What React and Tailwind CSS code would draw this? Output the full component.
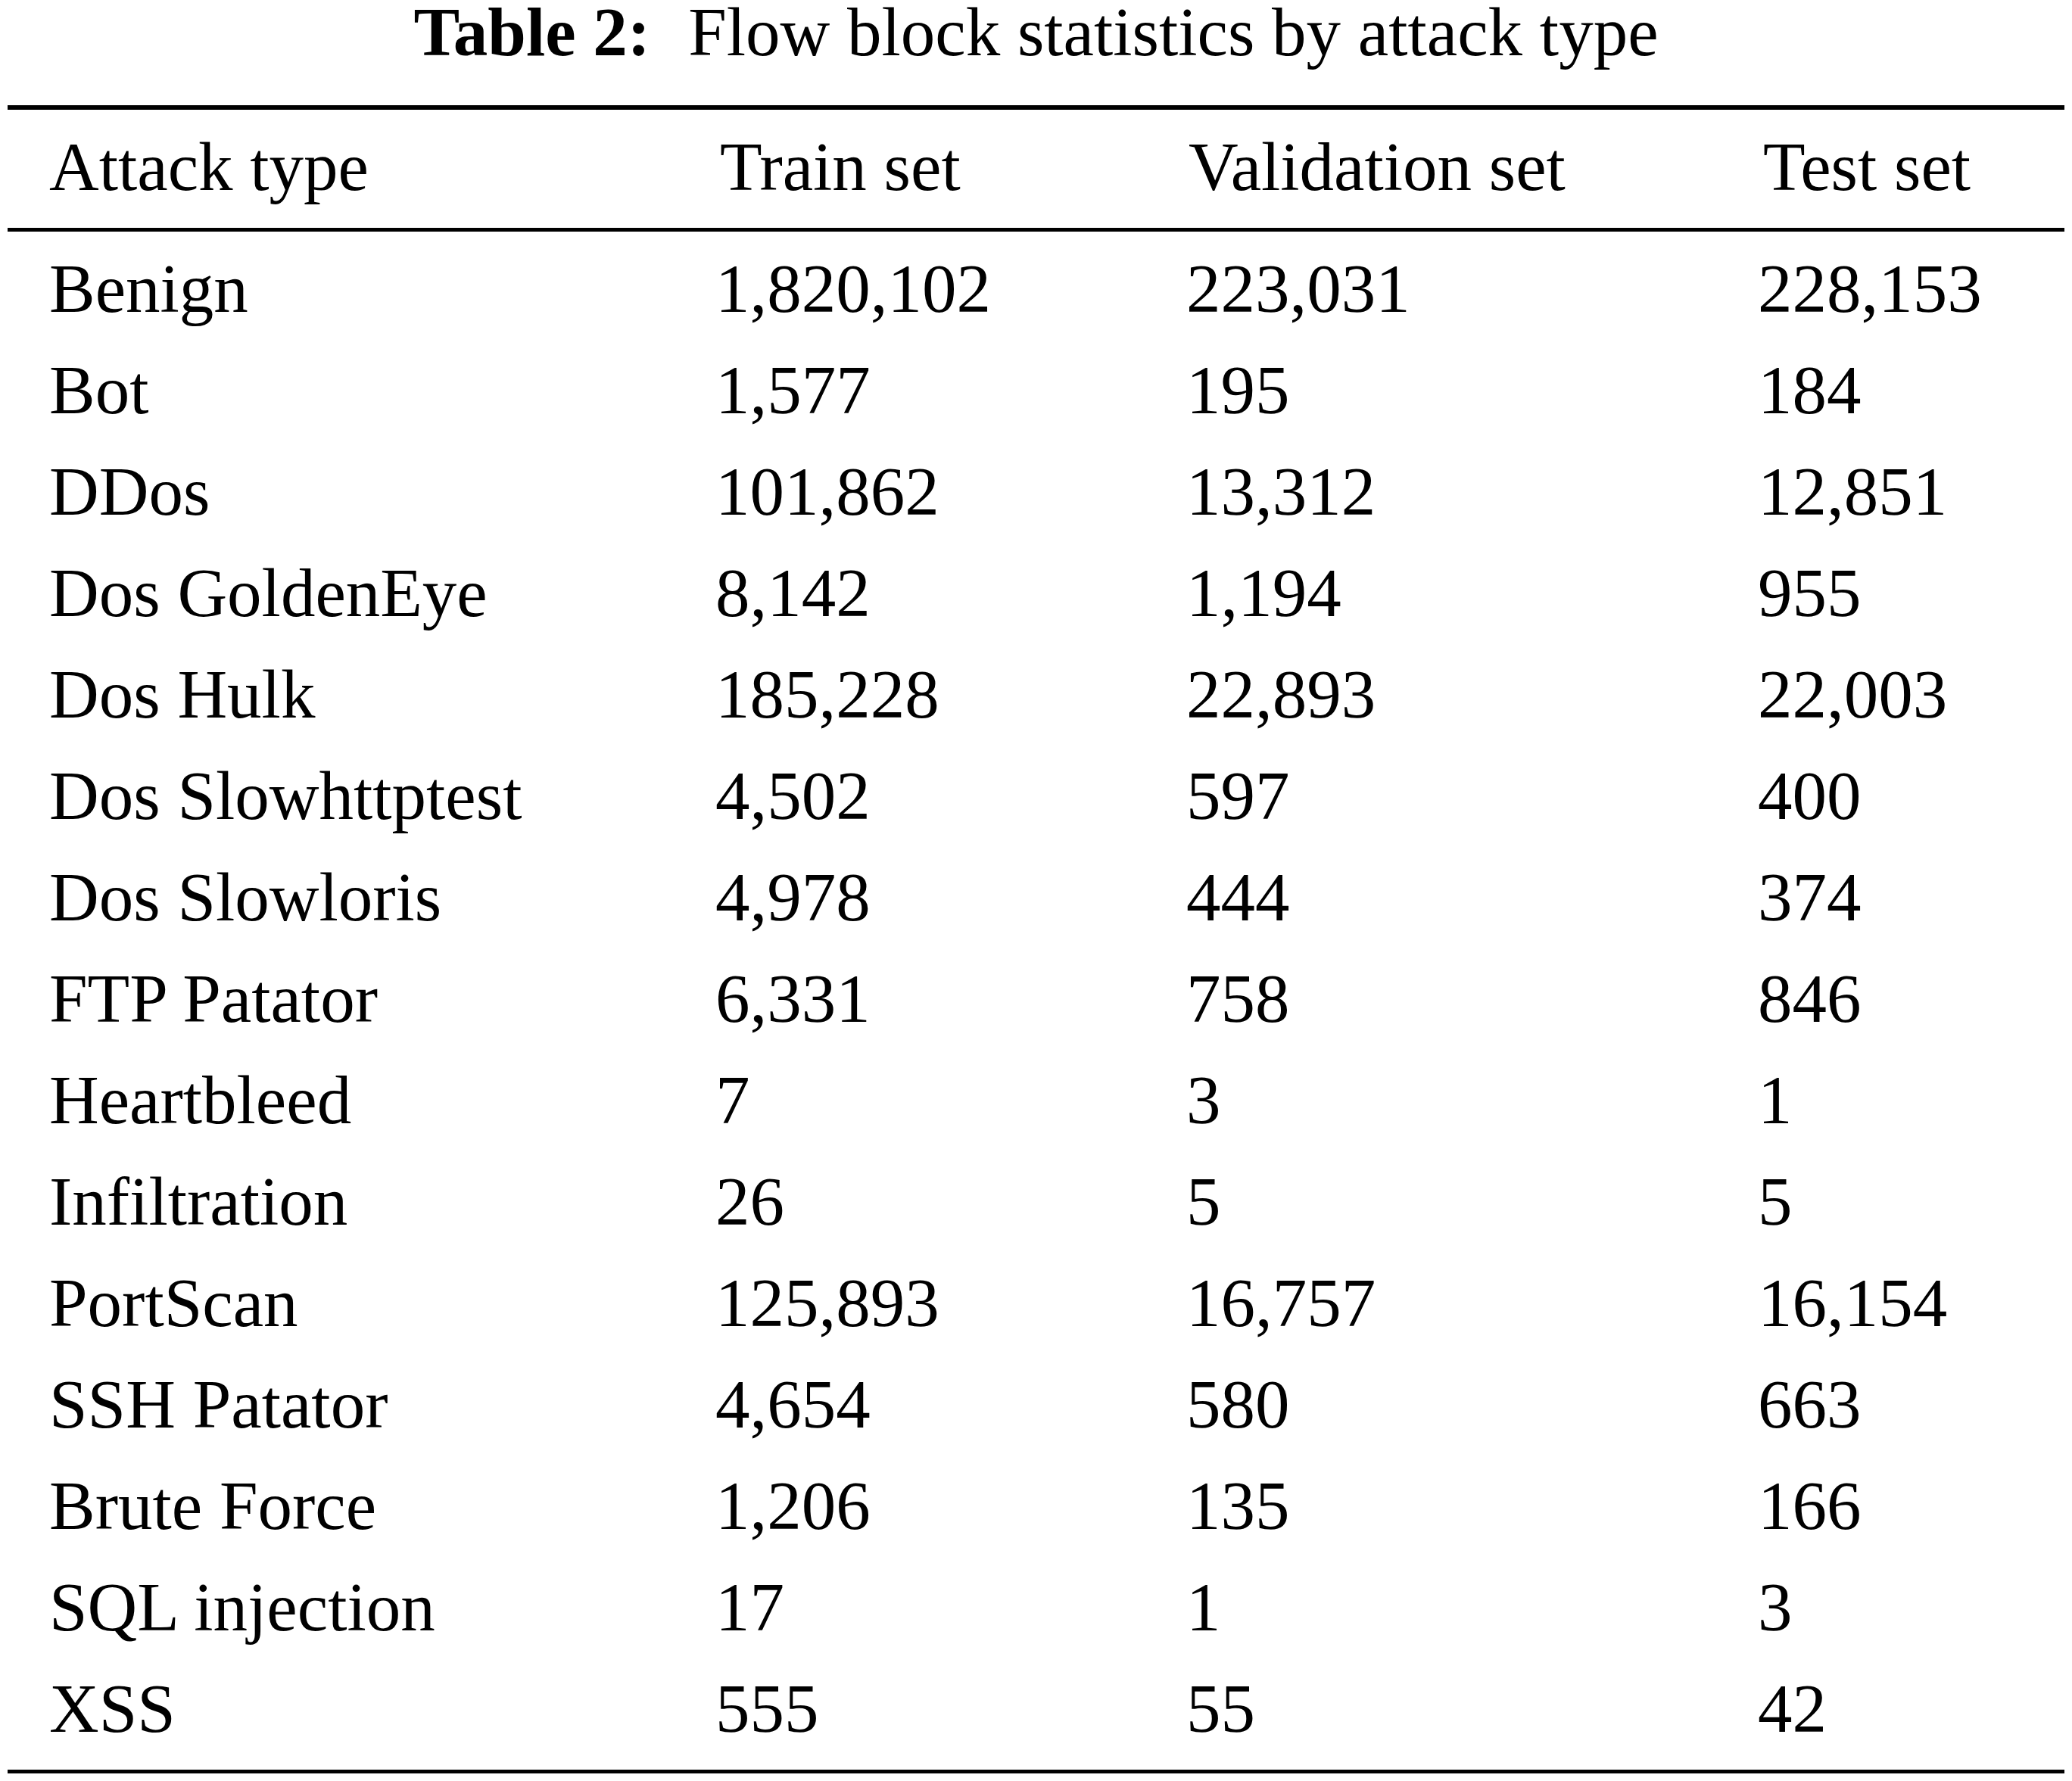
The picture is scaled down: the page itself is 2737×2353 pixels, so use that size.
const rows = [
  ["Benign", "1,820,102", "223,031", "228,153"],
  ["Bot", "1,577", "195", "184"],
  ["DDos", "101,862", "13,312", "12,851"],
  ["Dos GoldenEye", "8,142", "1,194", "955"],
  ["Dos Hulk", "185,228", "22,893", "22,003"],
  ["Dos Slowhttptest", "4,502", "597", "400"],
  ["Dos Slowloris", "4,978", "444", "374"],
  ["FTP Patator", "6,331", "758", "846"],
  ["Heartbleed", "7", "3", "1"],
  ["Infiltration", "26", "5", "5"],
  ["PortScan", "125,893", "16,757", "16,154"],
  ["SSH Patator", "4,654", "580", "663"],
  ["Brute Force", "1,206", "135", "166"],
  ["SQL injection", "17", "1", "3"],
  ["XSS", "555", "55", "42"],
];

export default function App() {
  return (
    <div className="w-[2737px] h-[2353px] bg-white text-black font-['Liberation_Serif','Times_New_Roman',serif] text-[91px] whitespace-nowrap overflow-hidden">
      <div className="h-[86px] leading-[86px] text-center">
        <span className="font-bold">Table 2:</span>
        <span className="ml-[50px]">Flow block statistics by attack type</span>
      </div>
      <div className="mx-[10px] mt-[53px]">
        <div className="h-[6px] bg-black" />
        <div className="grid grid-cols-[880px_622px_755px_1fr] pl-[55px] h-[156px] leading-[152px] pb-[4px]">
          <div>Attack type</div>
          <div className="pl-[6px]">Train set</div>
          <div className="pl-[3px]">Validation set</div>
          <div className="pl-[7px]">Test set</div>
        </div>
        <div className="h-[5px] bg-black" />
        <div className="pt-[9px] pb-[13px]">
          {rows.map((r) => (
            <div
              key={r[0]}
              className="grid grid-cols-[880px_622px_755px_1fr] pl-[55px] h-[134px] leading-[134px]"
            >
              <div>{r[0]}</div>
              <div>{r[1]}</div>
              <div>{r[2]}</div>
              <div>{r[3]}</div>
            </div>
          ))}
        </div>
        <div className="h-[5px] bg-black" />
      </div>
    </div>
  );
}
